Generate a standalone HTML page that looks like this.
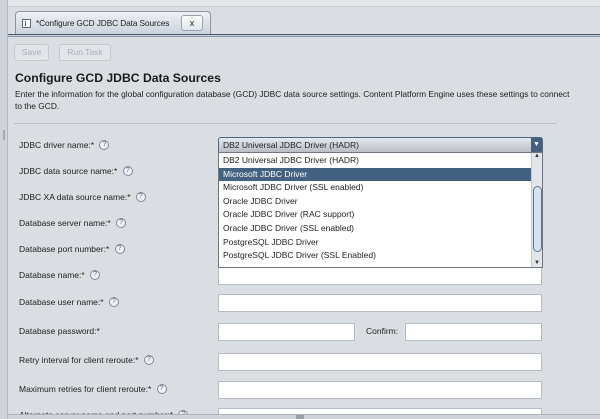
<!DOCTYPE html>
<html><head><style>
*{margin:0;padding:0;box-sizing:border-box}
html,body{width:600px;height:419px;overflow:hidden}
body{background:#dadde2;font-family:"Liberation Sans",Arial,sans-serif;font-size:8.5px;color:#222;position:relative}
.a{position:absolute}
.lbl{position:absolute;left:19px;font-size:8.5px;line-height:11px;color:#222;white-space:nowrap}
.q{position:relative;top:-1px;display:inline-block;width:10px;height:10px;border:1px solid #888;border-radius:50%;font-size:7px;line-height:8px;text-align:center;color:#666;margin-left:3px;vertical-align:middle;background:#eef}
.in{position:absolute;left:218px;width:324px;height:18px;background:#fff;border:1px solid #b7bcc4}
.li{height:13.6px;line-height:13.6px;padding-left:4px;font-size:8.5px;white-space:nowrap}
</style></head><body>
<div class="a" style="left:0;top:0;width:600px;height:7px;background:#e4e6ea;border-bottom:1px solid #c8ccd2"></div>
<div class="a" style="left:0;top:0;width:8px;height:419px;background:#cfd3d9;border-right:1px solid #b5bac2"></div>
<div class="a" style="left:3px;top:130px;width:2px;height:10px;background:#aaa"></div>
<!-- tab -->
<div class="a" style="left:15px;top:11px;width:196px;height:25px;background:linear-gradient(#eef0f3,#c9d0da);border:1px solid #8a95a5;border-bottom:none;border-radius:4px 4px 0 0"></div>
<div class="a" style="left:22px;top:19px;width:9px;height:9px;border:1px solid #5b6b80;background:#fff"><div style="position:absolute;left:2px;top:1px;width:1px;height:5px;background:#5b6b80"></div></div>
<div class="a" style="left:36px;top:18px;font-size:8.3px;color:#222;white-space:nowrap;letter-spacing:-0.1px">*Configure GCD JDBC Data Sources</div>
<div class="a" style="left:181px;top:15px;width:22px;height:16px;border:1px solid #9aa2ae;border-radius:3px;background:linear-gradient(#fff,#e2e5ea);font-size:9px;text-align:center;line-height:14px">x</div>
<div class="a" style="left:8px;top:34px;width:592px;height:3px;border-top:1px solid #4d5b6e;border-bottom:1px solid #8d98a8;background:#c6ccd5"></div>
<!-- buttons -->
<div class="a" style="left:14px;top:44px;width:35px;height:17px;border:1px solid #c4c8ce;border-radius:3px;background:#e2e4e8;color:#aab;font-size:8.5px;text-align:center;line-height:15px">Save</div>
<div class="a" style="left:59px;top:44px;width:52px;height:17px;border:1px solid #c4c8ce;border-radius:3px;background:#e2e4e8;color:#aab;font-size:8.5px;text-align:center;line-height:15px">Run Task</div>
<div class="a" style="left:15px;top:71px;font-size:12.2px;font-weight:bold;color:#1a1a1a">Configure GCD JDBC Data Sources</div>
<div class="a" style="left:15px;top:88px;font-size:8.4px;line-height:12px;width:560px">Enter the information for the global configuration database (GCD) JDBC data source settings. Content Platform Engine uses these settings to connect to the GCD.</div>
<div class="a" style="left:14px;top:123px;width:543px;height:1px;background:#b9bdc4"></div>
<!-- labels -->
<div class="lbl" style="top:140px">JDBC driver name:* <span class="q">?</span></div>
<div class="lbl" style="top:166px">JDBC data source name:* <span class="q">?</span></div>
<div class="lbl" style="top:192px">JDBC XA data source name:* <span class="q">?</span></div>
<div class="lbl" style="top:218px">Database server name:* <span class="q">?</span></div>
<div class="lbl" style="top:244px">Database port number:* <span class="q">?</span></div>
<div class="lbl" style="top:270px">Database name:* <span class="q">?</span></div>
<div class="lbl" style="top:297px">Database user name:* <span class="q">?</span></div>
<div class="lbl" style="top:326px">Database password:*</div>
<div class="lbl" style="top:355px">Retry interval for client reroute:* <span class="q">?</span></div>
<div class="lbl" style="top:384px">Maximum retries for client reroute:* <span class="q">?</span></div>
<div class="lbl" style="top:410px">Alternate server name and port number:* <span class="q">?</span></div>
<!-- inputs -->
<div class="in" style="top:267px"></div>
<div class="in" style="top:294px"></div>
<div class="in" style="top:323px;width:137px"></div>
<div class="a" style="left:366px;top:326px;font-size:8.5px">Confirm:</div>
<div class="in" style="top:323px;left:405px;width:137px"></div>
<div class="in" style="top:353px"></div>
<div class="in" style="top:381px"></div>
<div class="in" style="top:408px;height:8px"></div>
<!-- dropdown -->
<div class="a" style="left:218px;top:137px;width:325px;height:16px;border:1px solid #4d6684;border-radius:3px 3px 0 0;background:linear-gradient(#e6e8ec,#b9bec6);font-size:8.5px;line-height:14px;padding-left:4px">DB2 Universal JDBC Driver (HADR)</div>
<div class="a" style="left:531px;top:138px;width:11px;height:14px;background:#45607f;color:#fff;font-size:7px;text-align:center;line-height:14px">▼</div>
<div class="a" style="left:218px;top:152px;width:325px;height:116px;background:#fff;border:1px solid #6f7680">
 <div style="padding-top:1px;width:312px">
 <div class="li">DB2 Universal JDBC Driver (HADR)</div>
 <div class="li" style="background:#436282;color:#fff">Microsoft JDBC Driver</div>
 <div class="li">Microsoft JDBC Driver (SSL enabled)</div>
 <div class="li">Oracle JDBC Driver</div>
 <div class="li">Oracle JDBC Driver (RAC support)</div>
 <div class="li">Oracle JDBC Driver (SSL enabled)</div>
 <div class="li">PostgreSQL JDBC Driver</div>
 <div class="li">PostgreSQL JDBC Driver (SSL Enabled)</div>
 </div>
 <div class="a" style="left:312px;top:0;width:11px;height:114px;background:#e2e5e9;border-left:1px solid #c5c9cf">
  <div style="font-size:6px;text-align:center;color:#333">▲</div>
  <div class="a" style="left:1px;top:33px;width:9px;height:66px;border:1px solid #5b7391;border-radius:5px;background:#d7e2ef"></div>
  <div class="a" style="left:0;bottom:1px;width:10px;font-size:6px;text-align:center;color:#333">▼</div>
 </div>
</div>
<div class="a" style="left:8px;top:414px;width:592px;height:5px;background:#d0d4da;border-top:1px solid #aeb3bb"></div>
<div class="a" style="left:296px;top:415px;width:8px;height:4px;background:#9aa0a8"></div>
</body></html>
